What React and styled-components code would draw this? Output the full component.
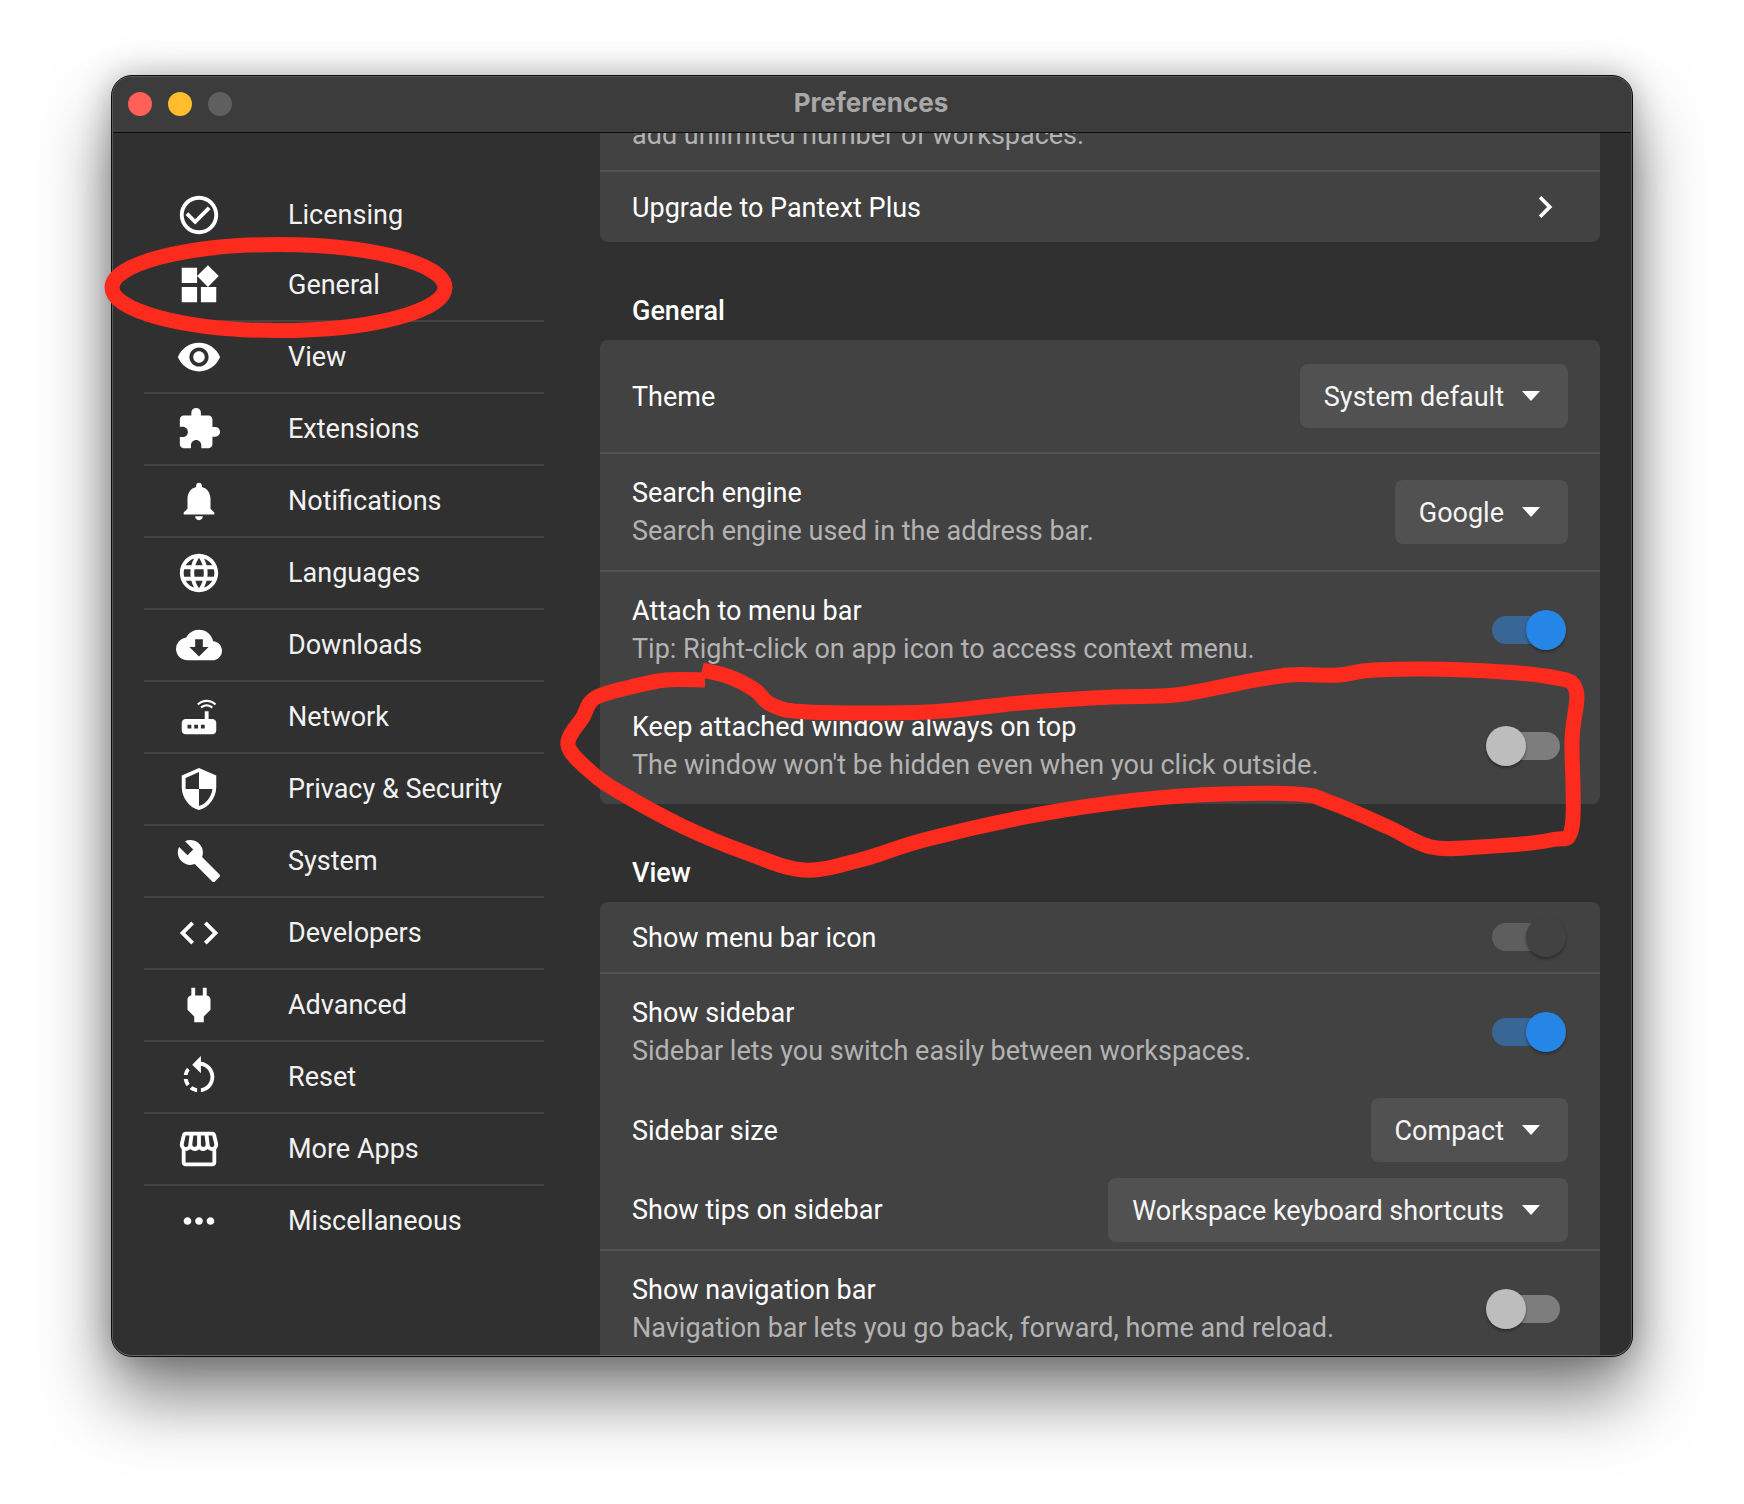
import React from 'react';
import styled, { createGlobalStyle } from 'styled-components';
import {
  MdCheckCircleOutline, MdWidgets, MdVisibility, MdExtension, MdNotifications, MdLanguage,
  MdCloudDownload, MdRouter, MdSecurity, MdBuild, MdCode, MdPower, MdRotateLeft, MdStorefront,
  MdMoreHoriz, MdChevronRight,
} from 'react-icons/md';

const Global = createGlobalStyle`
  html, body { margin: 0; padding: 0; background: #fff; }
  body { font-family: Roboto, "Liberation Sans", sans-serif; }
`;

const Stage = styled.div`
  width: 1744px;
  height: 1504px;
  padding: 75px 111px 0;
  box-sizing: border-box;
  position: relative;
  overflow: hidden;
`;

const Win = styled.div`
  width: 1522px;
  height: 1282px;
  box-sizing: border-box;
  border: 1px solid #0c0c0c;
  border-radius: 21px;
  box-shadow: 0 40px 70px rgba(0, 0, 0, 0.5), 0 0 32px rgba(0, 0, 0, 0.26);
  background: #303030;
`;

const Frame = styled.div`
  height: 100%;
  box-sizing: border-box;
  border: 1px solid #5a5a5a;
  border-bottom-color: #666;
  border-radius: 20px;
  overflow: hidden;
  display: flex;
  flex-direction: column;
`;

const TitleBar = styled.div`
  flex: none;
  height: 55px;
  background: #3c3c3c;
  border-bottom: 1px solid #0c0c0c;
  position: relative;
  display: flex;
  align-items: center;
  justify-content: center;
`;

const Lights = styled.div`
  position: absolute;
  left: 15px;
  top: 15px;
  display: flex;
  gap: 16px;
`;

const Light = styled.span`
  width: 24px;
  height: 24px;
  border-radius: 50%;
  background: ${(p) => p.$c};
`;

const WinTitle = styled.div`
  font-family: Inter, "Liberation Sans", sans-serif;
  font-weight: 700;
  font-size: 26px;
  color: #a8a8a8;
  margin: 0 0 4px -2px;
`;

const Body = styled.div`
  flex: 1;
  min-height: 0;
  display: flex;
  background: #303030;
`;

const Sidebar = styled.nav`
  flex: none;
  width: 400px;
  margin-left: 31px;
  padding-top: 45px;
`;

const NavRow = styled.div`
  height: 72px;
  box-sizing: border-box;
  padding: ${(p) => (p.$first ? '4px' : '0')} 0 0 32px;
  display: flex;
  align-items: center;
  border-bottom: 2px solid ${(p) => (p.$plain ? 'transparent' : '#444')};
  color: #fff;
  svg { flex: none; width: 46px; height: 46px; }
`;

const NavLabel = styled.span`
  margin-left: 66px;
  font-size: 27px;
  color: #f2f2f2;
`;

const Main = styled.main`
  flex: none;
  width: 1000px;
  margin-left: 56px;
  overflow: hidden;
`;

const Card = styled.section`
  background: #424242;
  border-radius: ${(p) => (p.$openTop ? '0 0 8px 8px' : p.$openBottom ? '8px 8px 0 0' : '8px')};
`;

const Heading = styled.h2`
  margin: 0;
  height: 98px;
  box-sizing: border-box;
  padding: 0 0 10px 32px;
  display: flex;
  align-items: flex-end;
  font-size: 27px;
  font-weight: 500;
  line-height: 38px;
  color: #fff;
`;

const Row = styled.div`
  box-sizing: border-box;
  height: ${(p) => p.$h}px;
  padding: 0 32px;
  display: flex;
  align-items: center;
  justify-content: space-between;
  border-bottom: ${(p) => (p.$divider ? '2px solid #535353' : '0')};
`;

const ClippedRow = styled.div`
  box-sizing: border-box;
  height: 39px;
  padding: 0 32px 16px;
  display: flex;
  align-items: flex-end;
  overflow: hidden;
  border-bottom: 2px solid #535353;
`;

const Texts = styled.div`
  display: flex;
  flex-direction: column;
  padding-bottom: 1px;
`;

const Title = styled.div`
  font-size: 27px;
  line-height: 38px;
  padding-top: 1px;
  color: #fff;
`;

const Sub = styled.div`
  font-size: 27px;
  line-height: 38px;
  color: #b3b3b3;
`;

const SelectBtn = styled.div`
  height: 64px;
  box-sizing: border-box;
  padding: 2px 28px 0 24px;
  border-radius: 8px;
  background: #515151;
  display: flex;
  align-items: center;
  gap: 18px;
  font-size: 27px;
  color: #f5f5f5;
  &::after {
    content: '';
    width: 0;
    height: 0;
    margin-top: -2px;
    border-left: 9.5px solid transparent;
    border-right: 9.5px solid transparent;
    border-top: 10px solid #fff;
  }
`;

const Track = styled.div`
  position: relative;
  width: 68px;
  height: 28px;
  margin-right: 8px;
  border-radius: 14px;
  background: ${(p) => (p.$mode === 'on' ? '#386695' : p.$mode === 'disabled' ? '#5e5e5e' : '#7d7d7d')};
`;

const Thumb = styled.span`
  position: absolute;
  top: -6px;
  left: ${(p) => (p.$mode === 'off' ? '-6px' : '34px')};
  width: 40px;
  height: 40px;
  border-radius: 50%;
  background: ${(p) => (p.$mode === 'on' ? '#2586e8' : p.$mode === 'disabled' ? '#424242' : '#bdbdbd')};
  box-shadow: 0 2px 3px rgba(0, 0, 0, 0.35);
`;

const Chevron = styled.span`
  color: #fff;
  display: flex;
  margin-right: 1px;
  svg { width: 44px; height: 44px; }
`;

const Overlay = styled.svg`
  position: absolute;
  left: 0;
  top: 0;
  width: 1744px;
  height: 1504px;
  pointer-events: none;
`;

const Toggle = ({ mode }) => (
  <Track $mode={mode}>
    <Thumb $mode={mode} />
  </Track>
);

const NAV = [
  ['Licensing', MdCheckCircleOutline, true, true],
  ['General', MdWidgets],
  ['View', MdVisibility],
  ['Extensions', MdExtension],
  ['Notifications', MdNotifications],
  ['Languages', MdLanguage],
  ['Downloads', MdCloudDownload],
  ['Network', MdRouter],
  ['Privacy & Security', MdSecurity],
  ['System', MdBuild],
  ['Developers', MdCode],
  ['Advanced', MdPower],
  ['Reset', MdRotateLeft],
  ['More Apps', MdStorefront],
  ['Miscellaneous', MdMoreHoriz, true],
];

const BLOB = [
  [705, 680], [666, 680], [631, 687], [595, 698], [583, 717], [568, 745], [592, 773], [621, 793],
  [684, 827], [747, 853], [804, 870], [860, 860], [924, 840], [1025, 817], [1112, 803], [1197, 795],
  [1296, 794], [1332, 803], [1388, 827], [1431, 847], [1480, 847], [1551, 840], [1572, 827],
  [1572, 740], [1576, 690], [1551, 677], [1466, 670], [1374, 670], [1339, 675], [1289, 675],
  [1240, 683], [1176, 695], [1112, 697], [1020, 703], [928, 712], [808, 712], [772, 705],
  [755, 690], [730, 677], [702, 670],
];

const smooth = (pts) => {
  let d = `M${pts[0][0]} ${pts[0][1]}`;
  for (let i = 0; i < pts.length - 1; i++) {
    const p0 = pts[Math.max(i - 1, 0)];
    const p1 = pts[i];
    const p2 = pts[i + 1];
    const p3 = pts[Math.min(i + 2, pts.length - 1)];
    d += ` C${p1[0] + (p2[0] - p0[0]) / 6} ${p1[1] + (p2[1] - p0[1]) / 6} ${p2[0] - (p3[0] - p1[0]) / 6} ${p2[1] - (p3[1] - p1[1]) / 6} ${p2[0]} ${p2[1]}`;
  }
  return d;
};

export default function App() {
  return (
    <Stage>
      <Global />
      <Win>
        <Frame>
          <TitleBar>
            <Lights>
              <Light $c="#ff6058" />
              <Light $c="#ffbd2e" />
              <Light $c="#5f5f5f" />
            </Lights>
            <WinTitle>Preferences</WinTitle>
          </TitleBar>
          <Body>
            <Sidebar>
              {NAV.map(([label, Icon, plain, first]) => (
                <NavRow key={label} $plain={plain} $first={first}>
                  <Icon />
                  <NavLabel>{label}</NavLabel>
                </NavRow>
              ))}
            </Sidebar>
            <Main>
              <Card $openTop>
                <ClippedRow>
                  <Sub>add unlimited number of workspaces.</Sub>
                </ClippedRow>
                <Row $h={70}>
                  <Title>Upgrade to Pantext Plus</Title>
                  <Chevron><MdChevronRight /></Chevron>
                </Row>
              </Card>
              <Heading>General</Heading>
              <Card>
                <Row $h={114} $divider>
                  <Title>Theme</Title>
                  <SelectBtn>System default</SelectBtn>
                </Row>
                <Row $h={118} $divider>
                  <Texts>
                    <Title>Search engine</Title>
                    <Sub>Search engine used in the address bar.</Sub>
                  </Texts>
                  <SelectBtn>Google</SelectBtn>
                </Row>
                <Row $h={116}>
                  <Texts>
                    <Title>Attach to menu bar</Title>
                    <Sub>Tip: Right-click on app icon to access context menu.</Sub>
                  </Texts>
                  <Toggle mode="on" />
                </Row>
                <Row $h={116}>
                  <Texts>
                    <Title>Keep attached window always on top</Title>
                    <Sub>The window won't be hidden even when you click outside.</Sub>
                  </Texts>
                  <Toggle mode="off" />
                </Row>
              </Card>
              <Heading>View</Heading>
              <Card $openBottom>
                <Row $h={72} $divider>
                  <Title>Show menu bar icon</Title>
                  <Toggle mode="disabled" />
                </Row>
                <Row $h={116}>
                  <Texts>
                    <Title>Show sidebar</Title>
                    <Sub>Sidebar lets you switch easily between workspaces.</Sub>
                  </Texts>
                  <Toggle mode="on" />
                </Row>
                <Row $h={80}>
                  <Title>Sidebar size</Title>
                  <SelectBtn>Compact</SelectBtn>
                </Row>
                <Row $h={81} $divider>
                  <Title>Show tips on sidebar</Title>
                  <SelectBtn>Workspace keyboard shortcuts</SelectBtn>
                </Row>
                <Row $h={116}>
                  <Texts>
                    <Title>Show navigation bar</Title>
                    <Sub>Navigation bar lets you go back, forward, home and reload.</Sub>
                  </Texts>
                  <Toggle mode="off" />
                </Row>
              </Card>
            </Main>
          </Body>
        </Frame>
      </Win>
      <Overlay viewBox="0 0 1744 1504" fill="none" stroke="#fd2b1e" strokeWidth="15" strokeLinejoin="round">
        <ellipse cx="278.5" cy="287.5" rx="166.5" ry="43" />
        <path d={smooth(BLOB)} strokeLinecap="butt" />
      </Overlay>
    </Stage>
  );
}
